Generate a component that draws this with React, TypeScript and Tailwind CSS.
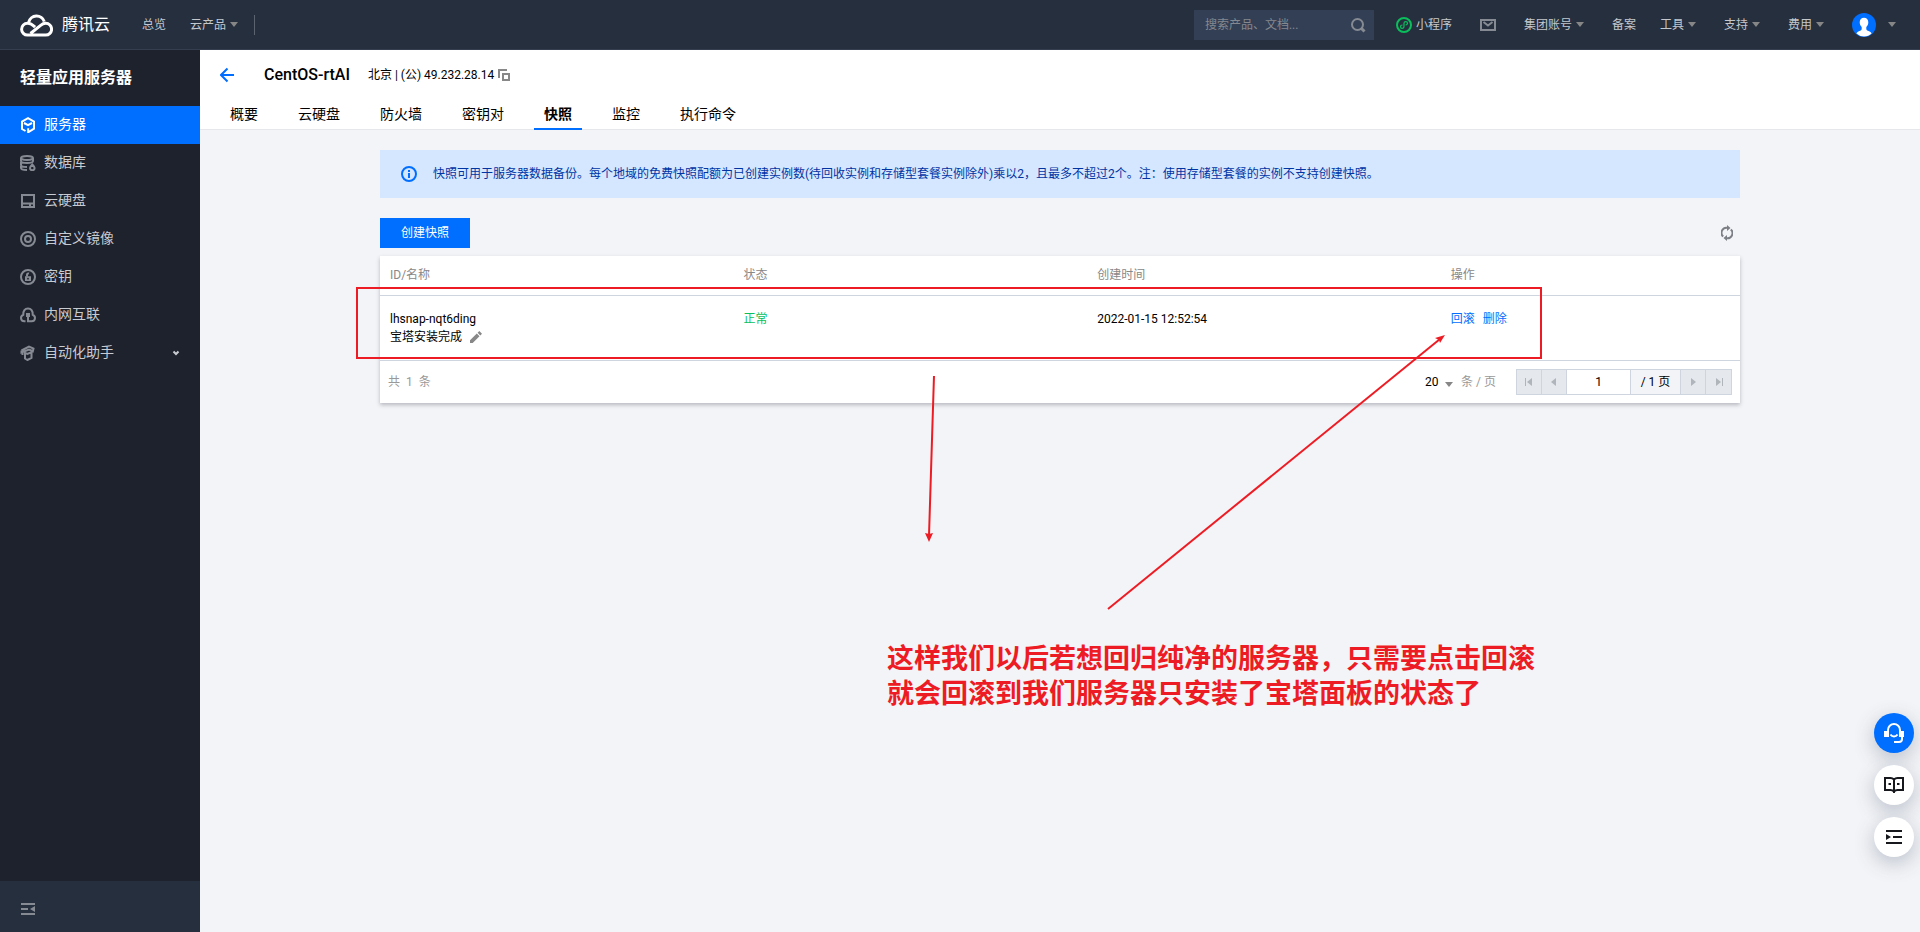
import type { ReactNode } from 'react';

const topLinks = ['支持', '费用'];

const tabs = ['概要', '云硬盘', '防火墙', '密钥对', '快照', '监控', '执行命令'];

const columns = ['ID/名称', '状态', '创建时间', '操作'];

const snapshots = [
  {
    id: 'lhsnap-nqt6ding',
    name: '宝塔安装完成',
    status: '正常',
    createdAt: '2022-01-15 12:52:54',
  },
];

function Caret({ className = '' }: { className?: string }) {
  return (
    <svg viewBox="0 0 8 5" className={`h-[5px] w-2 shrink-0 fill-[#868686] ${className}`} aria-hidden="true">
      <path d="M0 0h8L4 5z" />
    </svg>
  );
}

function CloudLogo() {
  return (
    <svg viewBox="0 0 33 24" className="h-6 w-[33px]" fill="none" stroke="#fff" strokeWidth="3" aria-hidden="true">
      <path d="M10.5 20.5 20.6 12.3c1.7-1.4 3.2-2 5.1-2a5.9 5.9 0 0 1 0 11.8H7.5a5.9 5.9 0 0 1 0-11.8c2.7 0 4.6 1 7.6 3.9" />
      <path d="M8.7 9.2a8.1 8.1 0 0 1 15.6-.6" />
    </svg>
  );
}

function MenuIcon({ children }: { children: ReactNode }) {
  return (
    <svg viewBox="0 0 16 16" className="size-4 shrink-0" fill="none" stroke="currentColor" strokeWidth="2" aria-hidden="true">
      {children}
    </svg>
  );
}

const menu = [
  {
    label: '服务器',
    active: true,
    icon: (
      <>
        <path d="M5.5 14 2 12V4.500L8 1.200l6 3.300v7.200l-5.800 3.600v-4" />
        <path d="M4 6l4 2.200L12 6" />
      </>
    ),
  },
  {
    label: '数据库',
    icon: (
      <>
        <ellipse cx="7" cy="3" rx="6" ry="2" />
        <path d="M1 3v3c0 1.200 2.500 2 6 2s6-.8 6-2V3M1 7v3c0 1.100 2 1.900 6 2M1 11v2c0 1.200 2.500 2 6 2" />
        <path d="M12.300 9.500c1.600 1.600 2.300 2.600 2.300 3.400a2.300 2.300 0 0 1-4.600 0c0-.8.7-1.800 2.300-3.400z" />
      </>
    ),
  },
  {
    label: '云硬盘',
    icon: (
      <>
        <path d="M2 2h12v12H2z" />
        <path d="M2 10.5h12" />
        <path d="M10 11v3" />
      </>
    ),
  },
  {
    label: '自定义镜像',
    icon: (
      <>
        <circle cx="8" cy="8" r="7" />
        <circle cx="8" cy="8" r="3" />
      </>
    ),
  },
  {
    label: '密钥',
    icon: (
      <>
        <circle cx="8" cy="8" r="7" />
        <path d="M7 7.5V5.800a1.500 1.500 0 0 1 2-1.300" strokeWidth="2" />
        <path d="M5 7.200h6V12H5zM8 8.800a.9.9 0 1 0 0 1.800.9.9 0 0 0 0-1.800z" fill="currentColor" fillRule="evenodd" stroke="none" />
      </>
    ),
  },
  {
    label: '内网互联',
    icon: (
      <>
        <path d="M5.5 14.3H4.4A3.4 3.4 0 0 1 1 11c0-1.7.8-2.7 2.3-3.3C3 4 5 1.5 8 1.5s5 2.5 4.7 6.2c1.5.6 2.3 1.600 2.3 3.300a3.400 3.400 0 0 1-3.400 3.300H8V9" />
        <path d="M6 6h4v4H6z" fill="currentColor" stroke="none" />
      </>
    ),
  },
  {
    label: '自动化助手',
    expandable: true,
    icon: (
      <>
        <path d="M1.5 5.5 9 1.5l4.500 2-1 4M1.5 5.500v2L9 4.500l3.500 1.500" />
        <path d="M5 8v5.500L7.500 15l4-2V7L7.500 9z" />
        <path d="M2.5 8v2" />
      </>
    ),
  },
];

function TopBar() {
  return (
    <header className="flex h-[50px] items-center justify-between border-b border-[#343e4e] bg-[#262f3e] text-xs text-[#c4c8cd]">
      <div className="flex items-center pl-5">
        <a href="#home" className="flex items-center gap-[9px] text-base text-white">
          <CloudLogo />
          腾讯云
        </a>
        <nav className="flex items-center">
          <a href="#overview" className="ml-8">总览</a>
          <button type="button" className="ml-6 flex items-center gap-1">
            云产品
            <Caret />
          </button>
        </nav>
        <span className="ml-4 h-5 w-px bg-[#5b6370]" />
      </div>

      <div className="flex items-center gap-7 pr-6">
        <form className="-mr-1.5 flex h-[30px] w-[180px] items-center bg-[#333f55] pr-2 pl-[11px]">
          <input
            type="text"
            aria-label="搜索产品、文档"
            placeholder="搜索产品、文档..."
            className="min-w-0 flex-1 bg-transparent outline-none placeholder:text-[#85888e]"
          />
          <button type="submit" aria-label="搜索" className="text-[#868b93]">
            <svg viewBox="0 0 16 16" className="size-4" fill="none" stroke="currentColor" strokeWidth="2" aria-hidden="true">
              <circle cx="7.5" cy="7.5" r="5.5" />
              <path d="m11 11 3.5 3.5" strokeWidth="3" />
            </svg>
          </button>
        </form>
        <a href="#mini" className="flex items-center gap-1">
          <svg viewBox="0 0 16 16" className="size-4" fill="none" stroke="#0abf5b" strokeWidth="2" aria-hidden="true">
            <circle cx="8" cy="8" r="7" />
            <path
              d="M6.500 8C5.200 8 4.500 8.700 4.500 9.700s.8 1.700 1.700 1.700c1 0 1.800-.7 1.800-1.700V6.300c0-1 .8-1.700 1.800-1.700.9 0 1.700.7 1.700 1.700S10.800 8 9.500 8"
              strokeWidth="1.200"
            />
          </svg>
          小程序
        </a>
        <button type="button" aria-label="站内信">
          <svg viewBox="0 0 16 12" className="h-3 w-4" fill="none" stroke="#868b93" strokeWidth="2" aria-hidden="true">
            <path d="M1 1h14v10H1z" />
            <path d="M3.5 3 8 6.500 12.500 3" />
          </svg>
        </button>
        <button type="button" className="flex items-center gap-1">
          集团账号
          <Caret />
        </button>
        <div className="flex items-center gap-6">
          <a href="#beian">备案</a>
          <button type="button" className="flex items-center gap-1">
            工具
            <Caret />
          </button>
        </div>
        {topLinks.map((label) => (
          <button key={label} type="button" className="flex items-center gap-1">
            {label}
            <Caret />
          </button>
        ))}
        <button type="button" aria-label="账号" className="flex items-center gap-3">
          <svg viewBox="0 0 24 24" className="size-6" aria-hidden="true">
            <circle cx="12" cy="12" r="12" fill="#006eff" />
            <path
              d="M12 4.8c-2.7 0-4.3 1.9-4.3 4.5 0 2 .8 3.7 2 4.7v2c0 .8-.6 1.3-1.6 1.7-1.6.6-3 1.2-3.7 2.8A11.4 11.4 0 0 0 12 23.5c3 0 5.600-1.100 7.600-3-.7-1.600-2.100-2.200-3.700-2.800-1-.4-1.600-.9-1.600-1.700v-2c1.200-1 2-2.700 2-4.700 0-2.600-1.600-4.500-4.300-4.500z"
              fill="#fff"
            />
          </svg>
          <Caret />
        </button>
      </div>
    </header>
  );
}

function Sidebar() {
  return (
    <aside className="flex w-[200px] shrink-0 flex-col bg-[#1e222d]">
      <h2 className="flex h-14 items-center px-5 text-base font-bold text-white">轻量应用服务器</h2>
      <nav className="flex-1">
        {menu.map((item) => (
          <a
            key={item.label}
            href={`#${item.label}`}
            className={`flex h-[38px] items-center gap-2 px-5 text-sm ${
              item.active ? 'bg-[#006eff] text-white' : 'text-[#868b93]'
            }`}
          >
            <MenuIcon>{item.icon}</MenuIcon>
            <span className={`pb-0.5 ${item.active ? 'text-white' : 'text-[#c8cbd0]'}`}>{item.label}</span>
            {item.expandable && (
              <svg viewBox="0 0 8 6" className="ml-auto h-1.5 w-2" fill="none" stroke="#c8cbd0" strokeWidth="2" aria-hidden="true">
                <path d="M1.5 1.5 4 4l2.500-2.500" />
              </svg>
            )}
          </a>
        ))}
      </nav>
      <div className="flex h-[51px] items-center bg-[#262f3e] px-5 pt-1">
        <button type="button" aria-label="收起菜单">
          <svg viewBox="0 0 16 16" className="size-4 fill-[#868b93]" aria-hidden="true">
            <path d="M1 2h14v2H1zM1 7h7v2H1zM1 12h14v2H1zM15 5v6l-5-3z" />
          </svg>
        </button>
      </div>
    </aside>
  );
}

function InstanceHeader() {
  return (
    <div className="border-b border-[#e5e7eb] bg-white">
      <div className="flex h-[50px] items-center pl-5">
        <a href="#back" aria-label="返回" className="text-[#006eff]">
          <svg viewBox="0 0 16 16" className="size-4" fill="none" stroke="currentColor" strokeWidth="2" aria-hidden="true">
            <path d="M14 8H1.500M7.500 1.500 1 8l6.500 6.500" />
          </svg>
        </a>
        <h1 className="ml-7 text-base font-medium">CentOS-rtAI</h1>
        <span className="ml-[18px] text-xs">北京 | (公) 49.232.28.14</span>
        <button type="button" aria-label="复制" className="ml-1">
          <svg viewBox="0 0 12 12" className="size-3" fill="none" stroke="#888" strokeWidth="2" aria-hidden="true">
            <path d="M5 5h6v6H5z" />
            <path d="M1 9V1h8" />
          </svg>
        </button>
      </div>
      <div role="tablist" className="-mb-px flex h-[30px] gap-5 px-5">
        {tabs.map((tab) => (
          <button
            key={tab}
            type="button"
            role="tab"
            aria-selected={tab === '快照'}
            className={`border-b-2 px-2.5 text-sm ${
              tab === '快照' ? 'border-[#006eff] font-bold' : 'border-transparent'
            }`}
          >
            {tab}
          </button>
        ))}
      </div>
    </div>
  );
}

function PageButton({ label, path }: { label: string; path: string }) {
  return (
    <button type="button" aria-label={label} disabled className="flex w-[25px] items-center justify-center bg-[#e5e8ed]">
      <svg viewBox="0 0 8 8" className="size-2 fill-[#b0b4bb]" aria-hidden="true">
        <path d={path} />
      </svg>
    </button>
  );
}

function SnapshotTable() {
  return (
    <div className="mt-2 bg-white shadow-[0_2px_4px_rgba(54,58,80,0.32)]">
      <table className="w-full table-fixed text-left">
        <thead>
          <tr className="h-[39px] border-b border-[#cfd5de] text-[#888]">
            {columns.map((column) => (
              <th key={column} className="w-[26%] px-2.5 font-normal last:w-auto">
                {column}
              </th>
            ))}
          </tr>
        </thead>
        <tbody>
          {snapshots.map((row) => (
            <tr key={row.id} className="border-b border-[#cfd5de] align-top leading-[18px]">
              <td className="px-2.5 py-3.5">
                <p>{row.id}</p>
                <p className="flex items-center gap-2">
                  {row.name}
                  <button type="button" aria-label="编辑名称">
                    <svg viewBox="0 0 12 12" className="size-3 fill-[#888]" aria-hidden="true">
                      <path d="M0 12V9.3L6.800 2.500l2.700 2.700L2.700 12zM7.600 1.700 9.300 0 12 2.700l-1.700 1.700z" />
                    </svg>
                  </button>
                </p>
              </td>
              <td className="px-2.5 py-3.5 text-[#0abf5b]">{row.status}</td>
              <td className="px-2.5 py-3.5">{row.createdAt}</td>
              <td className="px-2.5 py-3.5">
                <div className="flex gap-2 text-[#006eff]">
                  <a href="#rollback">回滚</a>
                  <a href="#delete">删除</a>
                </div>
              </td>
            </tr>
          ))}
        </tbody>
      </table>

      <div className="flex h-[42px] items-center justify-between px-2 text-[#999]">
        <p className="flex gap-1.5">
          <span>共</span>
          <span>1</span>
          <span>条</span>
        </p>
        <div className="flex items-center">
          <div className="relative flex items-center">
            <select aria-label="每页条数" defaultValue="20" className="w-7 appearance-none text-black">
              <option>20</option>
              <option>50</option>
            </select>
            <Caret className="pointer-events-none absolute top-1/2 right-0" />
          </div>
          <span className="ml-2">条 / 页</span>
          <div className="ml-5 flex h-[26px] divide-x divide-[#cfd5de] border border-[#cfd5de] text-black">
            <PageButton label="第一页" path="M0 0h1v8H0zM7 0v8L2 4z" />
            <PageButton label="上一页" path="M6 0v8L1 4z" />
            <input type="text" aria-label="页码" defaultValue="1" className="w-16 text-center outline-none" />
            <span className="flex w-[50px] items-center justify-center bg-[#f3f4f7]">/ 1 页</span>
            <PageButton label="下一页" path="M2 0v8l5-4z" />
            <PageButton label="最后一页" path="M1 0v8l5-4zM7 0h1v8H7z" />
          </div>
        </div>
      </div>
    </div>
  );
}

// Hand-made marks laid over the table, placed from the content column's top left corner
function Annotations() {
  return (
    <div className="pointer-events-none absolute inset-0 text-[#ed1c24]">
      <div className="absolute top-[137px] -left-6 h-[72px] w-[1186px] border-2 border-current" />
      <svg viewBox="0 0 1360 500" className="absolute top-0 left-0 h-[500px] w-[1360px] fill-current stroke-current" aria-hidden="true">
        <path d="M554 226 549 386" strokeWidth="2" />
        <path d="m549 392-4-9 4 1 4-1z" strokeWidth="0" />
        <path d="M728 459 1060 189" strokeWidth="2" />
        <path d="m1065 185-5 8-1-3-4-2z" strokeWidth="0" />
      </svg>
      <p className="absolute top-[492px] left-[507px] text-[27px] leading-[35px] font-bold whitespace-nowrap">
        这样我们以后若想回归纯净的服务器，只需要点击回滚
        <br />
        就会回滚到我们服务器只安装了宝塔面板的状态了
      </p>
    </div>
  );
}

function FloatingTools() {
  return (
    <div className="fixed right-1.5 bottom-[75px] flex flex-col gap-3">
      <button type="button" aria-label="在线客服" className="flex size-10 items-center justify-center rounded-full bg-[#006eff] shadow-[0_6px_20px_rgba(54,68,99,0.3)]">
        <svg viewBox="0 0 20 20" className="size-5" fill="none" stroke="#fff" strokeWidth="2" aria-hidden="true">
          <path d="M4 14V7a6 6 0 0 1 12 0v7" />
          <path d="M18 8v6M2 8v6" strokeWidth="4" />
          <path d="M18 14v2a3 3 0 0 1-3 3h-5" />
          <path d="M6.5 11.5c1.700 2.600 5.300 2.600 7 0" />
        </svg>
      </button>
      <button type="button" aria-label="文档" className="flex size-10 items-center justify-center rounded-full bg-white shadow-[0_6px_20px_rgba(54,68,99,0.3)]">
        <svg viewBox="0 0 20 20" className="size-5" fill="none" stroke="#16181d" strokeWidth="2" aria-hidden="true">
          <path d="M10 4.5C9 3.500 8 3 6.500 3H1v12h5.500c1.500 0 2.500.5 3.500 1.500 1-1 2-1.500 3.500-1.500H19V3h-5.500C12 3 11 3.500 10 4.500zM10 4v14" />
          <path d="M4.5 9H7M13 9h2.500" />
        </svg>
      </button>
      <button type="button" aria-label="展开目录" className="flex size-10 items-center justify-center rounded-full bg-white shadow-[0_6px_20px_rgba(54,68,99,0.3)]">
        <svg viewBox="0 0 16 14" className="h-3.5 w-4 fill-[#16181d]" aria-hidden="true">
          <path d="M0 0h16v2H0zM7 6h9v2H7zM0 12h16v2H0zM0 4v6l5-3z" />
        </svg>
      </button>
    </div>
  );
}

export default function App() {
  return (
    <div className="flex min-h-screen flex-col font-['Roboto','Noto_Sans_CJK_SC',sans-serif] text-xs text-black">
      <TopBar />
      <div className="flex flex-1">
        <Sidebar />
        <main className="min-w-0 flex-1 bg-[#f3f4f7]">
          <InstanceHeader />
          <div className="px-5 pt-5">
            <div className="relative mx-auto max-w-[1360px]">
              <div className="flex h-12 items-center gap-4 bg-[#d5e7ff] px-[21px] text-[#0034a3]">
                <svg viewBox="0 0 16 16" className="size-4 shrink-0" fill="none" stroke="#006eff" strokeWidth="2" aria-hidden="true">
                  <circle cx="8" cy="8" r="7" />
                  <path d="M8 7v5M8 4v2" />
                </svg>
                <p>
                  快照可用于服务器数据备份。每个地域的免费快照配额为已创建实例数(待回收实例和存储型套餐实例除外)乘以2，且最多不超过2个。注：使用存储型套餐的实例不支持创建快照。
                </p>
              </div>
              <div className="mt-5 flex items-center justify-between pr-[7px]">
                <button type="button" className="h-[30px] w-[90px] bg-[#006eff] text-white">
                  创建快照
                </button>
                <button type="button" aria-label="刷新">
                  <svg viewBox="0 0 12 16" className="h-4 w-3" fill="none" stroke="#7c7f85" strokeWidth="2" aria-hidden="true">
                    <path d="M2.2 11.5A5 5 0 0 1 7 3M9.800 4.500A5 5 0 0 1 5 13" />
                    <path d="M6 0v6l3.500-3zM6 16v-6l-3.500 3z" fill="#7c7f85" stroke="none" />
                  </svg>
                </button>
              </div>
              <SnapshotTable />
              <Annotations />
            </div>
          </div>
        </main>
      </div>
      <FloatingTools />
    </div>
  );
}
